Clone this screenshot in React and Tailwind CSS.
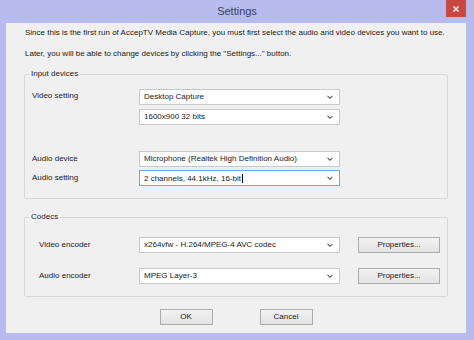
import React from 'react';

const font = { fontFamily: '"Liberation Sans", Arial, sans-serif' };

const Chevron = () => (
    <svg width="6" height="4" viewBox="0 0 6 4" className="shrink-0">
        <path d="M0.5 0.8 L3 3.2 L5.5 0.8" fill="none" stroke="#606060" strokeWidth="1.1" />
    </svg>
);

const Combo = ({ value, focused }) => (
    <div
        className={`w-[201px] h-[16px] bg-white border flex items-center pl-[4px] pr-[6px] ${focused ? 'border-[#7ea6d8]' : 'border-[#c9c9c9]'}`}
    >
        <span className="flex-1 truncate text-[8px] text-[#1a1a1a] leading-none">
            {value}
            {focused && <span className="inline-block w-px h-[9px] bg-black align-middle ml-px" />}
        </span>
        <Chevron />
    </div>
);

const Button = ({ children, className = '' }) => (
    <div
        className={`h-[16px] border border-[#acacac] bg-gradient-to-b from-[#f2f2f2] to-[#e3e3e3] flex items-center justify-center text-[8px] text-[#1a1a1a] leading-none ${className}`}
    >
        {children}
    </div>
);

const Group = ({ title, children, className = '' }) => (
    <fieldset className={`mx-[18px] border border-[#d8d8d8] rounded-[2px] px-0 ${className}`}>
        <legend className="ml-[4px] px-[2px] text-[8px] leading-[12px] text-[#1a1a1a]">{title}</legend>
        {children}
    </fieldset>
);

export default function App() {
    return (
        <div style={font} className="w-[474px] h-[340px] bg-[#b8bbee] flex flex-col overflow-hidden">
            {/* title bar */}
            <div className="relative h-[23px] flex items-center justify-center">
                <span className="text-[11px] text-[#3a3f5c] leading-none">Settings</span>
                <div className="absolute right-[8px] top-0 w-[20px] h-[17px] bg-[#c8473f] flex items-center justify-center">
                    <svg width="6" height="6" viewBox="0 0 6 6">
                        <path d="M0.5 0.5 L5.5 5.5 M5.5 0.5 L0.5 5.5" stroke="#fff" strokeWidth="1.4" />
                    </svg>
                </div>
            </div>

            {/* client area */}
            <div className="ml-[6px] mr-[8px] mb-[7px] flex-1 bg-[#f0f0f0] flex flex-col">
                <div className="pl-[19px] pt-[4px] text-[8px] leading-[12px] text-[#1a1a1a]">
                    <p>Since this is the first run of AccepTV Media Capture, you must first select the audio and video devices you want to use.</p>
                    <p className="mt-[9px]">Later, you will be able to change devices by clicking the "Settings..." button.</p>
                </div>

                <Group title="Input devices" className="mt-[8px] pt-[9px] pb-[12px]">
                    <div className="flex items-center">
                        <span className="w-[114px] pl-[7px] text-[8px] text-[#1a1a1a] self-start pt-[1px]">Video setting</span>
                        <Combo value="Desktop Capture" />
                    </div>
                    <div className="flex items-center mt-[4px]">
                        <span className="w-[114px]" />
                        <Combo value="1600x900 32 bits" />
                    </div>
                    <div className="flex items-center mt-[26px]">
                        <span className="w-[114px] pl-[7px] text-[8px] text-[#1a1a1a]">Audio device</span>
                        <Combo value="Microphone (Realtek High Definition Audio)" />
                    </div>
                    <div className="flex items-center mt-[3px]">
                        <span className="w-[114px] pl-[7px] text-[8px] text-[#1a1a1a]">Audio setting</span>
                        <Combo value="2 channels, 44.1kHz, 16-bit" focused />
                    </div>
                </Group>

                <Group title="Codecs" className="mt-[12px] pt-[14px] pb-[12px]">
                    <div className="flex items-center">
                        <span className="w-[114px] pl-[14px] text-[8px] text-[#1a1a1a]">Video encoder</span>
                        <Combo value="x264vfw - H.264/MPEG-4 AVC codec" />
                        <Button className="ml-[18px] w-[82px]">Properties...</Button>
                    </div>
                    <div className="flex items-center mt-[15px]">
                        <span className="w-[114px] pl-[14px] text-[8px] text-[#1a1a1a]">Audio encoder</span>
                        <Combo value="MPEG Layer-3" />
                        <Button className="ml-[18px] w-[82px]">Properties...</Button>
                    </div>
                </Group>

                <div className="mt-[12px] flex justify-center gap-[47px]">
                    <Button className="w-[53px]">OK</Button>
                    <Button className="w-[53px]">Cancel</Button>
                </div>
            </div>
        </div>
    );
}
